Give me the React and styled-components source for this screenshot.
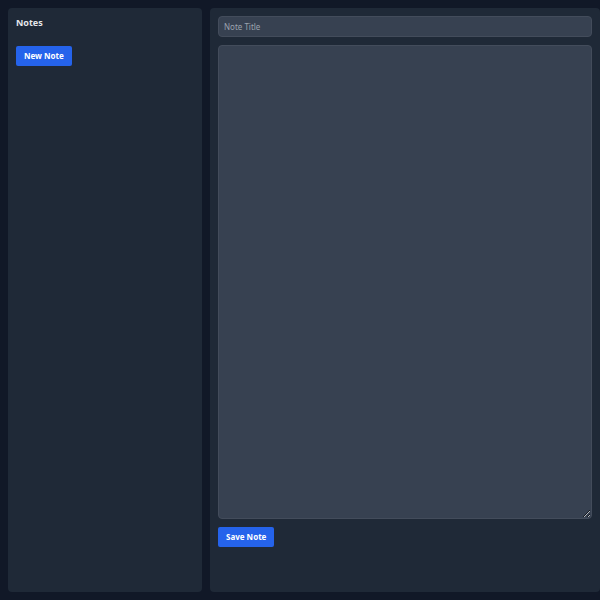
import React, {useState} from 'react';
import styled, {createGlobalStyle} from "styled-components";

const GlobalStyle = createGlobalStyle`
  * {
    box-sizing: border-box;
  }
  body {
    margin: 0;
    background: #111827;
    font-family: "Noto Sans", "Open Sans", sans-serif;
    color: #e5e7eb;
  }
`;

const App = () => {
  const [title, setTitle] = useState("");
  const [body, setBody] = useState("");

  return (
    <>
      <GlobalStyle/>
      <Container>
        <Sidebar>
          <Heading>Notes</Heading>
          <Button>New Note</Button>
        </Sidebar>
        <Editor>
          <TitleInput
            placeholder="Note Title"
            value={title}
            onChange={e => setTitle(e.target.value)}
          />
          <BodyInput value={body} onChange={e => setBody(e.target.value)}/>
          <Button>Save Note</Button>
        </Editor>
      </Container>
    </>
  );
};

const Button = styled.button`
  align-self: flex-start;
  height: 20px;
  padding: 0 8px;
  border: none;
  border-radius: 2px;
  background: #2563eb;
  color: #ffffff;
  font-family: inherit;
  font-size: 8px;
  font-weight: 700;
  line-height: 20px;
  cursor: pointer;
`;

const BodyInput = styled.textarea`
  width: 100%;
  height: 474px;
  margin-bottom: 8px;
  padding: 6px;
  border: 1px solid #434c5b;
  border-radius: 4px;
  background: #374151;
  color: #e5e7eb;
  font-family: inherit;
  font-size: 8px;
  outline: none;
`;

const TitleInput = styled.input`
  width: 100%;
  height: 21px;
  margin-bottom: 8px;
  padding: 0 5px;
  border: 1px solid #434c5b;
  border-radius: 4px;
  background: #374151;
  color: #e5e7eb;
  font-family: inherit;
  font-size: 8px;
  outline: none;

  &::placeholder {
    color: #9ca3af;
  }
`;

const Heading = styled.h2`
  margin: 0 0 16px;
  font-size: 9px;
  line-height: 14px;
  font-weight: 700;
  color: #e5e7eb;
`;

const Editor = styled.div`
  flex: 1;
  display: flex;
  flex-direction: column;
  padding: 8px;
  border-radius: 4px;
  background: #1f2937;
`;

const Sidebar = styled.div`
  width: 194px;
  display: flex;
  flex-direction: column;
  padding: 8px;
  border-radius: 4px;
  background: #1f2937;
`;

const Container = styled.div`
  height: 600px;
  display: flex;
  gap: 8px;
  padding: 8px 0 8px 8px;
`;

export default App;
